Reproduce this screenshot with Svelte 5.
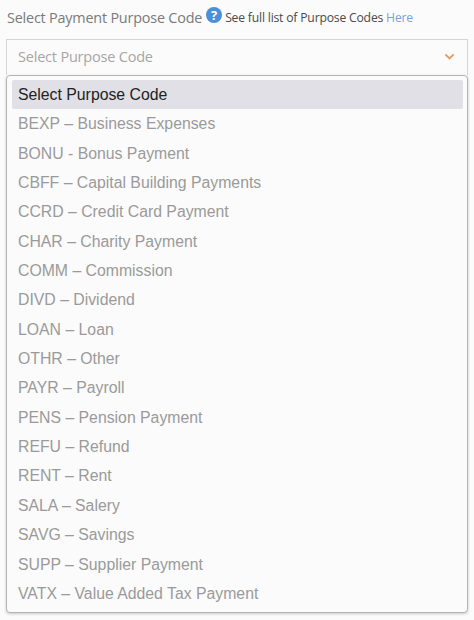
<script>
	const options = [
		'BEXP – Business Expenses',
		'BONU - Bonus Payment',
		'CBFF – Capital Building Payments',
		'CCRD – Credit Card Payment',
		'CHAR – Charity Payment',
		'COMM – Commission',
		'DIVD – Dividend',
		'LOAN – Loan',
		'OTHR – Other',
		'PAYR – Payroll',
		'PENS – Pension Payment',
		'REFU – Refund',
		'RENT – Rent',
		'SALA – Salery',
		'SAVG – Savings',
		'SUPP – Supplier Payment',
		'VATX – Value Added Tax Payment'
	];
</script>

<div class="page">
	<div class="label-row">
		<span class="label">Select Payment Purpose Code</span>
		<svg class="help" viewBox="0 0 16 16" width="16" height="16">
			<circle cx="8" cy="8" r="8" fill="#4a8fd8" />
			<text x="8" y="12.6" text-anchor="middle" class="help-mark">?</text>
		</svg>
		<span class="note">See full list of Purpose Codes <span class="link">Here</span></span>
	</div>

	<div class="select">
		<span>Select Purpose Code</span>
		<svg viewBox="0 0 12 8" width="11" height="7">
			<path d="M1.2 1.5 6 6.2l4.8-4.7" fill="none" stroke="#e59a63" stroke-width="2" />
		</svg>
	</div>

	<ul class="menu">
		<li class="active">Select Purpose Code</li>
		{#each options as opt}
			<li>{opt}</li>
		{/each}
	</ul>
</div>

<style>
	:global(body) {
		background: #fbfbfb;
	}

	.page {
		width: 474px;
		height: 620px;
		padding: 7px 6px 0;
		box-sizing: border-box;
		overflow: hidden;
	}

	.label-row {
		display: flex;
		align-items: center;
		height: 20px;
		margin-bottom: 12px;
		white-space: nowrap;
		font-family: "Open Sans", sans-serif;
	}

	.label {
		margin-left: 1px;
		font-size: 14.4px;
		letter-spacing: -0.2px;
		color: #7a7a7a;
	}

	.help {
		margin: 0 3px 4px 4px;
	}

	.help-mark {
		font: bold 13px "Open Sans", sans-serif;
		fill: #fff;
	}

	.note {
		font-size: 12.2px;
		letter-spacing: -0.2px;
		color: #4a4a4a;
	}

	.link {
		color: #7e9fdc;
	}

	.select {
		display: flex;
		align-items: center;
		justify-content: space-between;
		height: 36px;
		padding: 0 12px 2px 11px;
		box-sizing: border-box;
		border: 1px solid #d4d4d4;
		border-bottom: 0;
		font-family: "Open Sans", sans-serif;
		font-size: 14.5px;
		letter-spacing: -0.2px;
		color: #a6a6a6;
	}

	.menu {
		list-style: none;
		margin: 0;
		padding: 4px 4px 4px 5px;
		height: 538px;
		box-sizing: border-box;
		background: #fbfbfb;
		border: 1px solid #b4b4b4;
		border-radius: 4px;
		box-shadow: 0 1px 3px rgba(0, 0, 0, 0.2);
		font-family: "Liberation Sans", sans-serif;
		font-size: 15.8px;
		color: #9a9a9a;
	}

	li {
		height: 29.35px;
		line-height: 29.6px;
		padding-left: 6px;
		white-space: nowrap;
	}

	.active {
		background: #e0e0e6;
		border-radius: 2px;
		color: #222;
	}
</style>
